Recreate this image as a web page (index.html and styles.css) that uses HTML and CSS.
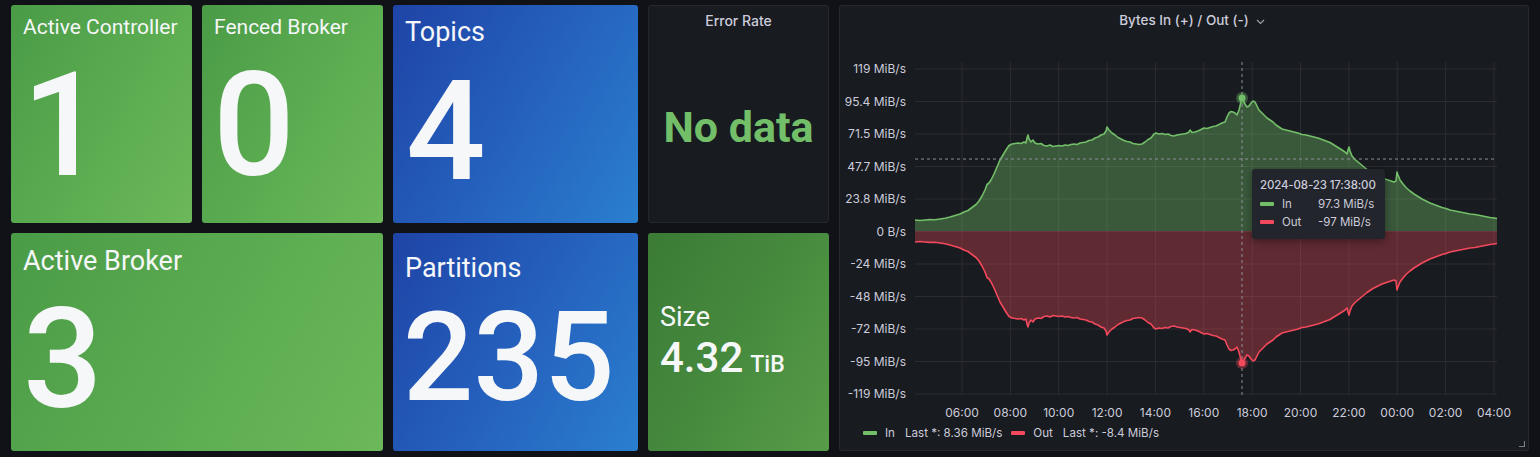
FILE: index.html
```html
<!DOCTYPE html>
<html lang="en">
<head>
<meta charset="utf-8">
<title>Kafka Overview</title>
<link rel="stylesheet" href="styles.css">
</head>
<body>
<div class="dash">
  <div class="stat green s-ctrl">
    <div class="stat-title t-small">Active Controller</div>
    <div class="stat-value v-big">1</div>
  </div>
  <div class="stat green s-ctrl">
    <div class="stat-title t-small">Fenced Broker</div>
    <div class="stat-value v-big">0</div>
  </div>
  <div class="stat blue s-topics">
    <div class="stat-title">Topics</div>
    <div class="stat-value v-topics">4</div>
  </div>
  <div class="panel error">
    <div class="panel-header">Error Rate</div>
    <div class="nodata">No data</div>
  </div>
  <div class="panel chart">
    <div class="panel-header chart-header"><span class="chart-title">Bytes In (+) / Out (-)<svg class="chev" width="9" height="6" viewBox="0 0 9 6"><path d="M1 1l3.5 3.5L8 1" fill="none" stroke="#9fa0a8" stroke-width="1.2"/></svg></span></div>
    <svg class="plot" width="688" height="388" viewBox="840 36 688 388">
      <g class="grid" stroke="#2b2d33" stroke-width="1">
        <path d="M915 69H1497M915 101.5H1497M915 134H1497M915 166.5H1497M915 199H1497M915 231.5H1497M915 264H1497M915 296.5H1497M915 329H1497M915 361.5H1497M915 394H1497"/>
        <path d="M962 62V395M1010.4 62V395M1058.7 62V395M1107.1 62V395M1155.4 62V395M1203.8 62V395M1252.2 62V395M1300.5 62V395M1348.9 62V395M1397.2 62V395M1445.6 62V395M1494 62V395"/>
      </g>
      <defs>
        <polygon id="inArea" points="915,231 915,220 920,220.5 925,220 930,219.6 935,219.8 940,219 945,218.2 950,217 955,215.5 960,214 964,212 968,210.5 972,207.5 976,204.5 979,201 982,196 985,190 987,184.5 989,183 991,180 994,174 997,167 1000,160 1003,155 1006,150 1009,145.5 1012,144 1015,143.5 1018,143 1021,143.5 1024,142 1026,143 1027,138 1028,135 1029,139 1031,142 1033,140 1035,143 1038,144 1041,143.5 1044,145.5 1047,146 1050,145 1053,146.5 1056,146 1059,145.5 1062,146 1065,145 1068,145.5 1071,144.5 1074,144 1077,144.5 1080,143 1083,142.5 1086,142 1089,140.5 1092,140 1095,138 1098,137 1101,135 1104,134 1106,131 1107,127 1109,130 1112,133 1115,135 1118,137.5 1121,139 1124,140.5 1127,141.5 1130,142 1133,143.5 1136,144 1139,144.5 1142,144 1145,142 1148,139.5 1151,138 1154,134 1156,133 1159,134 1162,133.5 1165,134.5 1168,134 1171,135.5 1174,136 1177,135 1180,134.5 1183,134 1186,133.5 1189,132 1190,130 1192,132.5 1195,132 1198,131 1201,129.5 1204,128 1207,128.5 1210,127.5 1213,126.5 1216,126 1219,124.5 1222,123 1225,122 1227,117 1229,113 1231,111.5 1233,112 1235,113 1237,115 1239,110 1241,102 1242,98 1243,100 1245,104 1247,107 1249,106 1251,103 1253,101 1255,102 1257,106 1259,110 1261,112 1264,115 1267,118 1270,120 1273,122 1276,125 1279,127 1282,129 1286,130 1290,131 1294,132 1298,133 1302,134.5 1306,135 1310,136 1314,137 1318,138 1322,139.5 1326,141 1330,142.5 1334,145 1338,147.5 1342,150 1345,152 1347,154 1348,150 1349,147 1350,151 1352,156 1355,159.5 1358,162 1361,164.5 1364,167 1367,169.5 1370,171.5 1373,173.5 1376,175 1379,176.5 1382,178 1385,179 1388,180 1391,181 1394,182 1396,181 1397,172 1398,175 1400,180 1403,184 1406,187.5 1410,191 1414,194 1418,196.5 1422,199 1426,201 1430,203 1434,204.5 1438,206 1442,207.5 1446,208.5 1450,210 1455,211 1460,212 1465,213 1470,214 1475,214.5 1480,215.5 1485,216.5 1490,217.5 1494,218 1497,218.5 1497,231"/>
        <polyline id="inLine" points="915,220 920,220.5 925,220 930,219.6 935,219.8 940,219 945,218.2 950,217 955,215.5 960,214 964,212 968,210.5 972,207.5 976,204.5 979,201 982,196 985,190 987,184.5 989,183 991,180 994,174 997,167 1000,160 1003,155 1006,150 1009,145.5 1012,144 1015,143.5 1018,143 1021,143.5 1024,142 1026,143 1027,138 1028,135 1029,139 1031,142 1033,140 1035,143 1038,144 1041,143.5 1044,145.5 1047,146 1050,145 1053,146.5 1056,146 1059,145.5 1062,146 1065,145 1068,145.5 1071,144.5 1074,144 1077,144.5 1080,143 1083,142.5 1086,142 1089,140.5 1092,140 1095,138 1098,137 1101,135 1104,134 1106,131 1107,127 1109,130 1112,133 1115,135 1118,137.5 1121,139 1124,140.5 1127,141.5 1130,142 1133,143.5 1136,144 1139,144.5 1142,144 1145,142 1148,139.5 1151,138 1154,134 1156,133 1159,134 1162,133.5 1165,134.5 1168,134 1171,135.5 1174,136 1177,135 1180,134.5 1183,134 1186,133.5 1189,132 1190,130 1192,132.5 1195,132 1198,131 1201,129.5 1204,128 1207,128.5 1210,127.5 1213,126.5 1216,126 1219,124.5 1222,123 1225,122 1227,117 1229,113 1231,111.5 1233,112 1235,113 1237,115 1239,110 1241,102 1242,98 1243,100 1245,104 1247,107 1249,106 1251,103 1253,101 1255,102 1257,106 1259,110 1261,112 1264,115 1267,118 1270,120 1273,122 1276,125 1279,127 1282,129 1286,130 1290,131 1294,132 1298,133 1302,134.5 1306,135 1310,136 1314,137 1318,138 1322,139.5 1326,141 1330,142.5 1334,145 1338,147.5 1342,150 1345,152 1347,154 1348,150 1349,147 1350,151 1352,156 1355,159.5 1358,162 1361,164.5 1364,167 1367,169.5 1370,171.5 1373,173.5 1376,175 1379,176.5 1382,178 1385,179 1388,180 1391,181 1394,182 1396,181 1397,172 1398,175 1400,180 1403,184 1406,187.5 1410,191 1414,194 1418,196.5 1422,199 1426,201 1430,203 1434,204.5 1438,206 1442,207.5 1446,208.5 1450,210 1455,211 1460,212 1465,213 1470,214 1475,214.5 1480,215.5 1485,216.5 1490,217.5 1494,218 1497,218.5"/>
      </defs>
      <use href="#inArea" fill="#73bf69" fill-opacity="0.38"/>
      <use href="#inArea" fill="#f2495c" fill-opacity="0.33" transform="matrix(1 0 0 -1 0 462)"/>
      <use href="#inLine" fill="none" stroke="#73bf69" stroke-width="1.6" stroke-linejoin="round"/>
      <use href="#inLine" fill="none" stroke="#f2495c" stroke-width="1.6" stroke-linejoin="round" transform="matrix(1 0 0 -1 0 462)"/>
      <g class="cross" stroke="#8d8f99" stroke-width="1" stroke-dasharray="3 3">
        <path d="M1242 62V395"/>
        <path d="M915 159H1497"/>
      </g>
      <circle cx="1242" cy="98" r="6" fill="#73bf69" fill-opacity="0.35"/>
      <circle cx="1242" cy="98" r="3.5" fill="#73bf69"/>
      <circle cx="1242" cy="363" r="6" fill="#f2495c" fill-opacity="0.35"/>
      <circle cx="1242" cy="363" r="3.5" fill="#f2495c"/>
      <g class="ylabels" text-anchor="end">
        <text x="906" y="73">119 MiB/s</text>
        <text x="906" y="105.5">95.4 MiB/s</text>
        <text x="906" y="138">71.5 MiB/s</text>
        <text x="906" y="170.5">47.7 MiB/s</text>
        <text x="906" y="203">23.8 MiB/s</text>
        <text x="906" y="235.5">0 B/s</text>
        <text x="906" y="268">-24 MiB/s</text>
        <text x="906" y="300.5">-48 MiB/s</text>
        <text x="906" y="333">-72 MiB/s</text>
        <text x="906" y="365.5">-95 MiB/s</text>
        <text x="906" y="398">-119 MiB/s</text>
      </g>
      <g class="xlabels" text-anchor="middle">
        <text x="962" y="417">06:00</text>
        <text x="1010.4" y="417">08:00</text>
        <text x="1058.7" y="417">10:00</text>
        <text x="1107.1" y="417">12:00</text>
        <text x="1155.4" y="417">14:00</text>
        <text x="1203.8" y="417">16:00</text>
        <text x="1252.2" y="417">18:00</text>
        <text x="1300.5" y="417">20:00</text>
        <text x="1348.9" y="417">22:00</text>
        <text x="1397.2" y="417">00:00</text>
        <text x="1445.6" y="417">02:00</text>
        <text x="1494" y="417">04:00</text>
      </g>
    </svg>
    <div class="legend">
      <span class="swatch sw-in"></span><span class="lg-name">In</span><span class="lg-val">Last *: 8.36 MiB/s</span>
      <span class="swatch sw-out"></span><span class="lg-name">Out</span><span class="lg-val">Last *: -8.4 MiB/s</span>
    </div>
    <div class="tooltip">
      <div class="tt-time">2024-08-23 17:38:00</div>
      <div class="tt-row"><span class="swatch sw-in"></span><span class="tt-name">In</span><span class="tt-val">97.3 MiB/s</span></div>
      <div class="tt-row"><span class="swatch sw-out"></span><span class="tt-name">Out</span><span class="tt-val">-97 MiB/s</span></div>
    </div>
    <svg class="resize" width="6" height="6" viewBox="0 0 6 6"><path d="M5.5 0V5.5H0" fill="none" stroke="#7b7d85" stroke-width="1.2"/></svg>
  </div>
  <div class="stat green s-abroker">
    <div class="stat-title">Active Broker</div>
    <div class="stat-value v-abroker">3</div>
  </div>
  <div class="stat blue s-parts">
    <div class="stat-title">Partitions</div>
    <div class="stat-value v-parts">235</div>
  </div>
  <div class="stat dgreen s-size">
    <div class="stat-title">Size</div>
    <div class="stat-value v-size">4.32<span class="unit">TiB</span></div>
  </div>
</div>
</body>
</html>
```
FILE: styles.css
```css
* { box-sizing: border-box; }
html, body { margin: 0; padding: 0; }
body {
  background: #111217;
  width: 1540px;
  height: 457px;
  overflow: hidden;
  font-family: Inter, "Noto Sans", sans-serif;
}
.dash {
  display: grid;
  grid-template-columns: 181px 181px 245px 181px 690px;
  grid-template-rows: 218px 218px;
  column-gap: 10px;
  row-gap: 10px;
  padding: 5px 0 0 11px;
}
.stat {
  border-radius: 3px;
  color: #f6f7f9;
  font-family: Roboto, "Liberation Sans", sans-serif;
  padding: 0 12px;
  display: flex;
  flex-direction: column;
  overflow: hidden;
}
.green { background: linear-gradient(120deg, #4a9b46 0%, #5aab50 50%, #6cb85a 100%); }
.blue { background: linear-gradient(120deg, #1e44a6 0%, #2560bd 50%, #2a7fcf 100%); }
.dgreen { background: linear-gradient(120deg, #3b7b35 0%, #468a3e 50%, #589c48 100%); }
.stat-title {
  font-size: 27px;
  line-height: 32px;
  white-space: nowrap;
}
.stat-title.t-small { font-size: 21px; line-height: 25px; }
.stat-value { line-height: 1; white-space: nowrap; font-weight: 500; }
.s-ctrl { padding-top: 10px; }
.v-big { font-size: 144px; margin-top: 14px; margin-left: -1px; }
.s-topics { padding-top: 11px; }
.v-topics { font-size: 140px; margin-top: 13px; margin-left: 1px; }
.s-abroker { grid-column: 1 / span 2; grid-row: 2; padding-top: 12px; }
.v-abroker { font-size: 140px; margin-top: 12px; margin-left: 0; }
.s-parts { grid-column: 3; grid-row: 2; padding-top: 19px; }
.v-parts { font-size: 124px; margin-top: 12px; margin-left: -2px; }
.s-size { grid-column: 4; grid-row: 2; padding-top: 68px; }
.v-size { font-size: 42px; margin-top: 4px; }
.unit { font-size: 23px; font-weight: 500; margin-left: 7px; }

.panel {
  background: #181b1f;
  border: 1px solid #24272c;
  border-radius: 3px;
  display: flex;
  flex-direction: column;
  position: relative;
}
.panel-header {
  height: 30px;
  flex: none;
  display: flex;
  align-items: center;
  justify-content: center;
  color: #ccccdc;
  font-size: 14px;
  font-weight: 500;
  line-height: 1;
}
.nodata {
  flex: 1;
  display: flex;
  align-items: center;
  justify-content: center;
  color: #73bf69;
  font-family: Roboto, "Liberation Sans", sans-serif;
  font-size: 43px;
  font-weight: 700;
  padding-bottom: 4px;
}
.chart { grid-column: 5; grid-row: 1 / span 2; }
.chart-title { position: relative; font-size: 13.5px; }
.chev { position: absolute; right: -16px; top: 5px; }
.plot { display: block; flex: none; }
.plot text { font-family: Inter, "Noto Sans", sans-serif; font-size: 12px; fill: #ccccdc; }
.legend {
  height: 18px;
  display: flex;
  align-items: center;
  padding-left: 23px;
  color: #ccccdc;
  font-size: 11.6px;
}
.swatch { width: 14px; height: 4px; border-radius: 1px; flex: none; display: inline-block; }
.sw-in { background: #73bf69; }
.sw-out { background: #f2495c; }
.lg-name { margin-left: 8px; }
.lg-val { margin-left: 10px; margin-right: 9px; }
.tooltip {
  position: absolute;
  left: 412px;
  top: 163px;
  background: #22252b;
  border-radius: 3px;
  box-shadow: 0 2px 8px rgba(0,0,0,0.4);
  padding: 8px 9px 8px 8px;
  color: #ccccdc;
  font-size: 11.5px;
  white-space: nowrap;
}
.tt-time { font-weight: 500; line-height: 16px; margin-bottom: 2px; letter-spacing: -0.15px; }
.tt-row { display: flex; align-items: center; height: 18px; }
.tt-name { margin-left: 8px; width: 36px; }
.tt-val { white-space: nowrap; }
.resize { position: absolute; right: 3px; bottom: 3px; }
```
